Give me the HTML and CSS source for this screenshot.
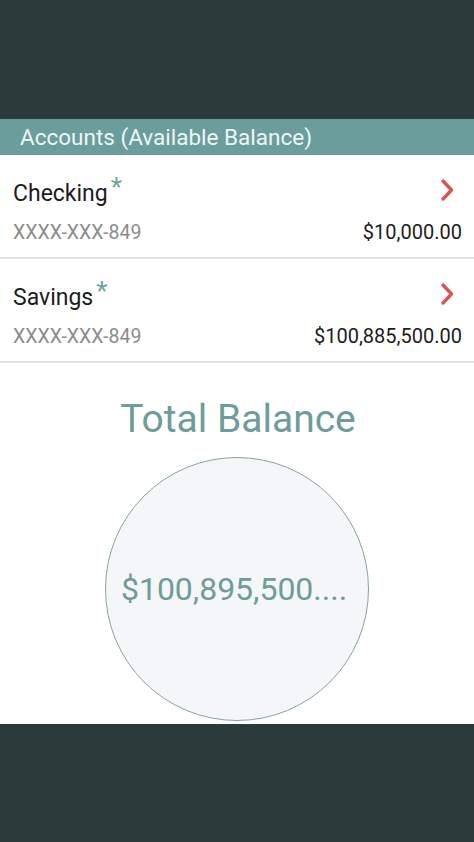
FILE: index.html
```html
<!DOCTYPE html>
<html>
<head>
<meta charset="utf-8">
<link rel="stylesheet" href="styles.css">
</head>
<body>

<div class="topbar"></div>

<div class="page">
    <div class="section-title">Accounts (Available Balance)</div>

    <div class="account">
        <div class="account-line top">
            <span class="account-name">Checking<span class="star">*</span></span>
            <svg class="chevron" width="16" height="24" viewBox="0 0 16 24"><path d="M4 3 L12.5 12 L4 21" /></svg>
        </div>
        <div class="account-line bottom">
            <span class="account-number">XXXX-XXX-849</span>
            <span class="account-amount">$10,000.00</span>
        </div>
    </div>

    <div class="account">
        <div class="account-line top">
            <span class="account-name">Savings<span class="star">*</span></span>
            <svg class="chevron" width="16" height="24" viewBox="0 0 16 24"><path d="M4 3 L12.5 12 L4 21" /></svg>
        </div>
        <div class="account-line bottom">
            <span class="account-number">XXXX-XXX-849</span>
            <span class="account-amount">$100,885,500.00</span>
        </div>
    </div>

    <div class="total">
        <div class="total-title">Total Balance</div>
        <div class="total-circle">$100,895,500....</div>
    </div>
</div>

<div class="bottombar"></div>

</body>
</html>
```

FILE: styles.css
```css
body {
    margin: 0;
    font-family: Roboto, "Liberation Sans", sans-serif;
    background: #2b3b3b;
}

.topbar {
    height: 119px;
}

.bottombar {
    height: 118px;
}

.page {
    background: #fff;
    height: 605px;
    display: flex;
    flex-direction: column;
}

.section-title {
    background: #6a9d9c;
    color: #eef6f5;
    font-size: 22.5px;
    height: 36px;
    line-height: 36px;
    padding-left: 20px;
}

.account {
    height: 102px;
    border-bottom: 2px solid #e4e4e4;
    padding: 0 12px 0 13px;
    display: flex;
    flex-direction: column;
}

.account-line {
    display: flex;
    justify-content: space-between;
    align-items: center;
}

.account-line.top {
    height: 28px;
    margin-top: 20px;
}

.account-line.bottom {
    height: 24px;
    margin-top: 17px;
}

.account-name {
    font-size: 23px;
    color: #1c1c1c;
}

.star {
    color: #6aa5a0;
    font-size: 26px;
    margin-left: 3px;
    vertical-align: 5px;
}

.chevron {
    margin-right: 7px;
    margin-top: 2px;
}

.chevron path {
    fill: none;
    stroke: #da5452;
    stroke-width: 3.4;
    stroke-linecap: round;
    stroke-linejoin: round;
}

.account-number {
    font-size: 19.5px;
    color: #8c8c8c;
}

.account-amount {
    font-size: 20px;
    color: #1c1c1c;
}

.total {
    display: flex;
    flex-direction: column;
    align-items: center;
}

.total-title {
    margin-top: 33px;
    font-size: 39px;
    color: #6e9c9b;
    margin-left: 2px;
}

.total-circle {
    margin-top: 15px;
    width: 264px;
    height: 264px;
    box-sizing: border-box;
    border: 1.5px solid #8aa3a3;
    border-radius: 50%;
    background: #f5f6f7;
    display: flex;
    align-items: center;
    justify-content: center;
    font-size: 32px;
    color: #6e9c9b;
    padding-right: 6px;
}
```
